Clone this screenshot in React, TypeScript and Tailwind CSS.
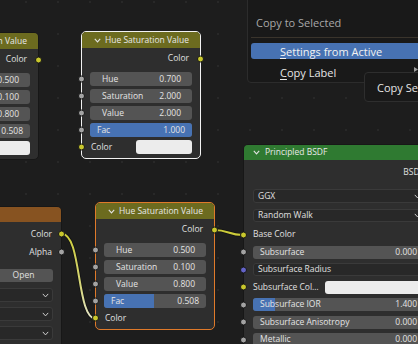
import React from "react";

type SockColor = "gray" | "yellow" | "purple" | "green";

const Socket = ({ c = "gray", pos }: { c?: SockColor; pos: string }) => {
  const bg =
    c === "yellow"
      ? "bg-[#c8c72c]"
      : c === "purple"
      ? "bg-[#6363c7]"
      : c === "green"
      ? "bg-[#63c763]"
      : "bg-[#a3a3a3]";
  return (
    <span
      className={`absolute top-1/2 -translate-y-1/2 w-[7px] h-[7px] rounded-full border border-[#161616] ${bg} ${pos}`}
    />
  );
};

const Chev = () => (
  <svg width="7" height="5" viewBox="0 0 7 5" className="shrink-0">
    <path d="M0.8 0.9 L3.5 3.9 L6.2 0.9" fill="none" stroke="#e2e2e2" strokeWidth="1.1" />
  </svg>
);

const NumField = ({
  label,
  value,
  sockPos,
}: {
  label: string;
  value: string;
  sockPos: string;
}) => (
  <div className="relative h-[14px]">
    <div className="h-full rounded-[3px] bg-[#545454] flex items-center justify-between pl-[12px] pr-[11px] text-[#e4e4e4] leading-none">
      <span>{label}</span>
      <span>{value}</span>
    </div>
    <Socket pos={sockPos} />
  </div>
);

const Slider = ({
  label,
  value,
  fill,
  sockPos,
  h = "h-[14px]",
  pr = "pr-[7px]",
}: {
  label: string;
  value: string;
  fill?: string;
  sockPos: string;
  h?: string;
  pr?: string;
}) => (
  <div className={`relative ${h}`}>
    <div
      className={`relative h-full rounded-[3px] bg-[#545454] overflow-hidden flex items-center justify-between pl-[7px] ${pr} text-[#e4e4e4] leading-none`}
    >
      {fill && <div className={`absolute inset-y-0 left-0 bg-[#4772b3] ${fill}`} />}
      <span className="relative">{label}</span>
      <span className="relative">{value}</span>
    </div>
    <Socket pos={sockPos} />
  </div>
);

const HSVNode = ({
  pos,
  border,
  values,
  fac,
  facFill,
  swatch,
}: {
  pos: string;
  border: string;
  values: [string, string, string];
  fac: string;
  facFill: string;
  swatch: boolean;
}) => (
  <div className={`absolute w-[120px] rounded-[5px] border bg-[#2e2e2e] text-[8.5px] ${pos} ${border}`}>
    <div className="h-[16px] rounded-t-[4px] bg-[#6c6b1f] flex items-center pl-[12px] gap-[4px] text-[#e8e8e8] leading-none">
      <Chev />
      <span>Hue Saturation Value</span>
    </div>
    <div className="px-[8px] pt-[2px] pb-[4px] flex flex-col">
      <div className="relative h-[17px] flex items-center justify-end pr-[3px] text-[#e0e0e0] leading-none">
        <span>Color</span>
        <Socket c="yellow" pos="-right-[12px]" />
      </div>
      <div className="mt-[5px] flex flex-col gap-[3px]">
        <NumField label="Hue" value={values[0]} sockPos="-left-[12px]" />
        <NumField label="Saturation" value={values[1]} sockPos="-left-[12px]" />
        <NumField label="Value" value={values[2]} sockPos="-left-[12px]" />
        <Slider label="Fac" value={fac} fill={facFill} sockPos="-left-[12px]" />
      </div>
      <div className="relative mt-[3px] h-[14px] flex items-center justify-between text-[#e0e0e0] leading-none">
        <span className="pl-[1px]">Color</span>
        {swatch && <div className="w-[56px] h-full rounded-[3px] bg-[#ececec]" />}
        <Socket c="yellow" pos="-left-[12px]" />
      </div>
    </div>
  </div>
);

const DarkDrop = ({ label, h = "h-[14px]" }: { label: string; h?: string }) => (
  <div
    className={`${h} rounded-[3px] bg-[#282828] border border-[#3a3a3a] flex items-center justify-between pl-[4px] pr-[3px] text-[#e0e0e0] leading-none`}
  >
    <span>{label}</span>
    <svg width="7" height="5" viewBox="0 0 7 5">
      <path d="M0.8 0.9 L3.5 3.9 L6.2 0.9" fill="none" stroke="#cfcfcf" strokeWidth="1" />
    </svg>
  </div>
);

export default function App() {
  return (
    <div className="relative w-[418px] h-[344px] overflow-hidden bg-[#1d1d1d] bg-[radial-gradient(circle,#282828_0.8px,transparent_1.4px)] bg-[length:32px_32px] bg-[position:10px_-14px] font-['Open_Sans','Noto_Sans',sans-serif]">
      {/* wires */}
      <svg className="absolute inset-0" width="418" height="344">
        <defs>
          <linearGradient id="w1" x1="0" y1="0" x2="0" y2="1">
            <stop offset="0" stopColor="#cccb3a" />
            <stop offset="0.6" stopColor="#d6d67a" />
            <stop offset="1" stopColor="#e4e4c8" />
          </linearGradient>
        </defs>
        <path d="M62 234 C 82 234, 76 319, 96 319" stroke="#121212" strokeWidth="3.6" fill="none" />
        <path d="M62 234 C 82 234, 76 319, 96 319" stroke="url(#w1)" strokeWidth="2" fill="none" />
        <path d="M214 230 C 229 230, 228 235, 243 235" stroke="#121212" strokeWidth="3.6" fill="none" />
        <path d="M214 230 C 229 230, 228 235, 243 235" stroke="#cccb3a" strokeWidth="2" fill="none" />
      </svg>

      {/* Node 1 (partially off-screen) */}
      <HSVNode
        pos="left-[-81px] top-[32px]"
        border="border-[#171717]"
        values={["0.500", "0.100", "0.800"]}
        fac="0.508"
        facFill="w-[49%]"
        swatch
      />

      {/* Node 2 (active) */}
      <HSVNode
        pos="left-[81px] top-[31px]"
        border="border-[#f2f2f2]"
        values={["0.700", "2.000", "2.000"]}
        fac="1.000"
        facFill="w-full"
        swatch
      />

      {/* Node 3 (selected) */}
      <HSVNode
        pos="left-[95px] top-[202px]"
        border="border-[#e07a2a]"
        values={["0.500", "0.100", "0.800"]}
        fac="0.508"
        facFill="w-[49%]"
        swatch={false}
      />

      {/* Image texture node (off-screen left) */}
      <div className="absolute left-[-138px] top-[206px] w-[200px] h-[160px] rounded-[5px] border border-[#171717] bg-[#2e2e2e] text-[8.5px]">
        <div className="h-[15px] rounded-t-[4px] bg-[#875321]" />
        <div className="px-[8px] pt-[3px] flex flex-col">
          <div className="relative h-[18px] flex items-center justify-end pr-[1px] text-[#e0e0e0] leading-none">
            <span>Color</span>
            <Socket c="yellow" pos="-right-[12px]" />
          </div>
          <div className="relative h-[18px] flex items-center justify-end pr-[1px] text-[#e0e0e0] leading-none">
            <span>Alpha</span>
            <Socket pos="-right-[12px]" />
          </div>
          <div className="mt-[8px] flex justify-end gap-[2px]">
            <div className="w-[59px] h-[13px] rounded-[3px] bg-[#545454] flex items-center justify-center text-[#e0e0e0] leading-none">
              New
            </div>
            <div className="w-[59px] h-[13px] rounded-[3px] bg-[#545454] flex items-center justify-center text-[#e0e0e0] leading-none">
              Open
            </div>
          </div>
          <div className="mt-[6px] flex flex-col gap-[5px]">
            <DarkDrop label="Linear" />
            <DarkDrop label="Flat" />
            <DarkDrop label="Repeat" />
          </div>
        </div>
      </div>

      {/* Principled BSDF */}
      <div className="absolute left-[243px] top-[144px] w-[192px] h-[220px] rounded-[5px] border border-[#171717] bg-[#2e2e2e] text-[8.5px]">
        <div className="h-[15px] rounded-t-[4px] bg-[#2f7a31] flex items-center pl-[9px] gap-[5px] text-[#e8e8e8] leading-none">
          <Chev />
          <span>Principled BSDF</span>
        </div>
        <div className="px-[9px] pt-[4px] flex flex-col">
          <div className="relative h-[17px] flex items-center justify-end pr-[1px] text-[#e0e0e0] leading-none">
            <span>BSDF</span>
            <Socket c="green" pos="-right-[13px]" />
          </div>
          <div className="mt-[8px] flex flex-col gap-[6px]">
            <DarkDrop label="GGX" />
            <DarkDrop label="Random Walk" h="h-[13px]" />
          </div>
          <div className="mt-[6px] flex flex-col gap-[4.5px]">
            <div className="relative h-[13px] flex items-center text-[#e0e0e0] leading-none">
              <span>Base Color</span>
              <Socket c="yellow" pos="-left-[13px]" />
            </div>
            <Slider label="Subsurface" value="0.000" sockPos="-left-[13px]" h="h-[13px]" pr="pr-[8px]" />
            <div className="relative h-[13px]">
              <div className="h-full rounded-[3px] bg-[#282828] border border-[#3a3a3a] flex items-center pl-[4px] text-[#e0e0e0] leading-none">
                Subsurface Radius
              </div>
              <Socket c="purple" pos="-left-[13px]" />
            </div>
            <div className="relative h-[13px] flex items-center text-[#e0e0e0] leading-none">
              <span className="w-[72px] shrink-0">Subsurface Col…</span>
              <div className="flex-1 h-full rounded-[3px] bg-[#ececec]" />
              <Socket c="yellow" pos="-left-[13px]" />
            </div>
            <Slider label="Subsurface IOR" value="1.400" fill="w-[13%]" sockPos="-left-[13px]" h="h-[13px]" pr="pr-[8px]" />
            <Slider label="Subsurface Anisotropy" value="0.000" sockPos="-left-[13px]" h="h-[13px]" pr="pr-[8px]" />
            <Slider label="Metallic" value="0.000" sockPos="-left-[13px]" h="h-[13px]" pr="pr-[8px]" />
          </div>
        </div>
      </div>

      {/* Context menu */}
      <div className="absolute left-[247px] top-[-6px] w-[200px] h-[89px] rounded-[4px] bg-[#191919] border border-[#2c2c2c] pt-[17px] px-[3px] text-[11px] leading-none">
        <div className="h-[20px] flex items-center pl-[5px] text-[#a8a8a8]">Copy to Selected</div>
        <div className="mt-[5px] h-px bg-[#3a342c]" />
        <div className="mt-[5px] h-[16px] rounded-l-[3px] bg-[#4772b3] flex items-center pl-[29px] text-[#f2f2f2]">
          <span>
            <span className="underline underline-offset-2">S</span>ettings from Active
          </span>
        </div>
        <div className="relative mt-[5px] h-[16px] flex items-center pl-[29px] text-[#e6e6e6]">
          <span>
            <span className="underline underline-offset-2">C</span>opy Label
          </span>
          <svg className="absolute left-[163px] top-[3px]" width="4" height="5" viewBox="0 0 4 5">
            <path d="M0 0 L4 2.5 L0 5 Z" fill="#9a9a9a" />
          </svg>
        </div>
      </div>

      {/* Sub popup */}
      <div className="absolute left-[364px] top-[72px] w-[120px] h-[30px] rounded-[4px] bg-[#191919] border border-[#2e2e2e] flex items-center pl-[12px] text-[11px] text-[#e6e6e6] leading-none whitespace-nowrap">
        Copy Selected
      </div>
    </div>
  );
}
